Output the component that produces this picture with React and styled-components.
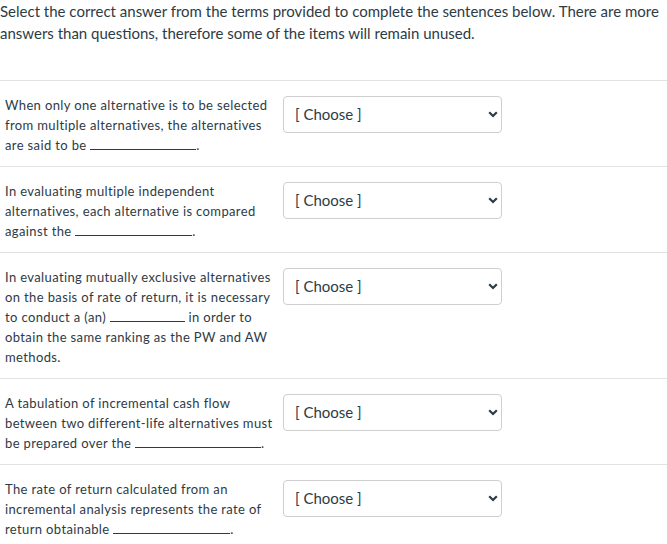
import React from "react";
import styled, { createGlobalStyle } from "styled-components";

const GlobalStyle = createGlobalStyle`
  body {
    margin: 0;
    background: #fff;
    font-family: Lato, "Open Sans", sans-serif;
    color: #2d3b45;
  }
`;

// each question: list of lines; a line is text, optionally with a blank of given width and trailing text
const questions = [
  [
    ["When only one alternative is to be selected"],
    ["from multiple alternatives, the alternatives"],
    ["are said to be ", 106, "."],
  ],
  [
    ["In evaluating multiple independent"],
    ["alternatives, each alternative is compared"],
    ["against the ", 117, "."],
  ],
  [
    ["In evaluating mutually exclusive alternatives"],
    ["on the basis of rate of return, it is necessary"],
    ["to conduct a (an) ", 75, " in order to"],
    ["obtain the same ranking as the PW and AW"],
    ["methods."],
  ],
  [
    ["A tabulation of incremental cash flow"],
    ["between two different-life alternatives must"],
    ["be prepared over the ", 126, "."],
  ],
  [
    ["The rate of return calculated from an"],
    ["incremental analysis represents the rate of"],
    ["return obtainable ", 117, "."],
  ],
];

function App() {
  return (
    <Page>
      <GlobalStyle />
      <Intro>
        Select the correct answer from the terms provided to complete the sentences below. There are more
        answers than questions, therefore some of the items will remain unused.
      </Intro>
      <List>
        {questions.map((lines, i) => (
          <Row key={i}>
            <Question>
              {lines.map(([text, blank, tail], j) => (
                <Line key={j}>
                  {text}
                  {blank && <Blank $w={blank} />}
                  {tail}
                </Line>
              ))}
            </Question>
            <SelectBox>
              <span>[ Choose ]</span>
              <svg width="10" height="7" viewBox="0 0 10 7">
                <polyline points="1.2,1.2 5,5 8.8,1.2" fill="none" stroke="#2d3b45" strokeWidth="2.2" />
              </svg>
            </SelectBox>
          </Row>
        ))}
      </List>
    </Page>
  );
}

export default App;

const Page = styled.div`
  width: 667px;
`;

const Intro = styled.p`
  margin: 0 0 36px 0;
  font-size: 15px;
  line-height: 22px;
  width: 667px;
`;

const List = styled.div`
  border-top: 1px solid #e2e2e2;
`;

const Row = styled.div`
  display: flex;
  align-items: flex-start;
  padding: 14px 0 11px 5px;
  border-bottom: 1px solid #e2e2e2;
`;

const Question = styled.div`
  width: 268px;
  font-size: 13px;
  line-height: 20px;
  letter-spacing: 0.37px;
`;

const Line = styled.div`
  white-space: nowrap;
`;

const Blank = styled.span`
  display: inline-block;
  width: ${(p) => p.$w}px;
  height: 13px;
  border-bottom: 1px solid #2d3b45;
  vertical-align: baseline;
`;

const SelectBox = styled.div`
  margin: 1px 0 0 10px;
  width: 219px;
  height: 37px;
  box-sizing: border-box;
  border: 1px solid #cfcfcf;
  border-radius: 4px;
  display: flex;
  align-items: center;
  justify-content: space-between;
  padding: 0 3px 0 11px;
  font-size: 15px;
  color: #2d3b45;

  span {
    margin-top: -1px;
  }
`;
